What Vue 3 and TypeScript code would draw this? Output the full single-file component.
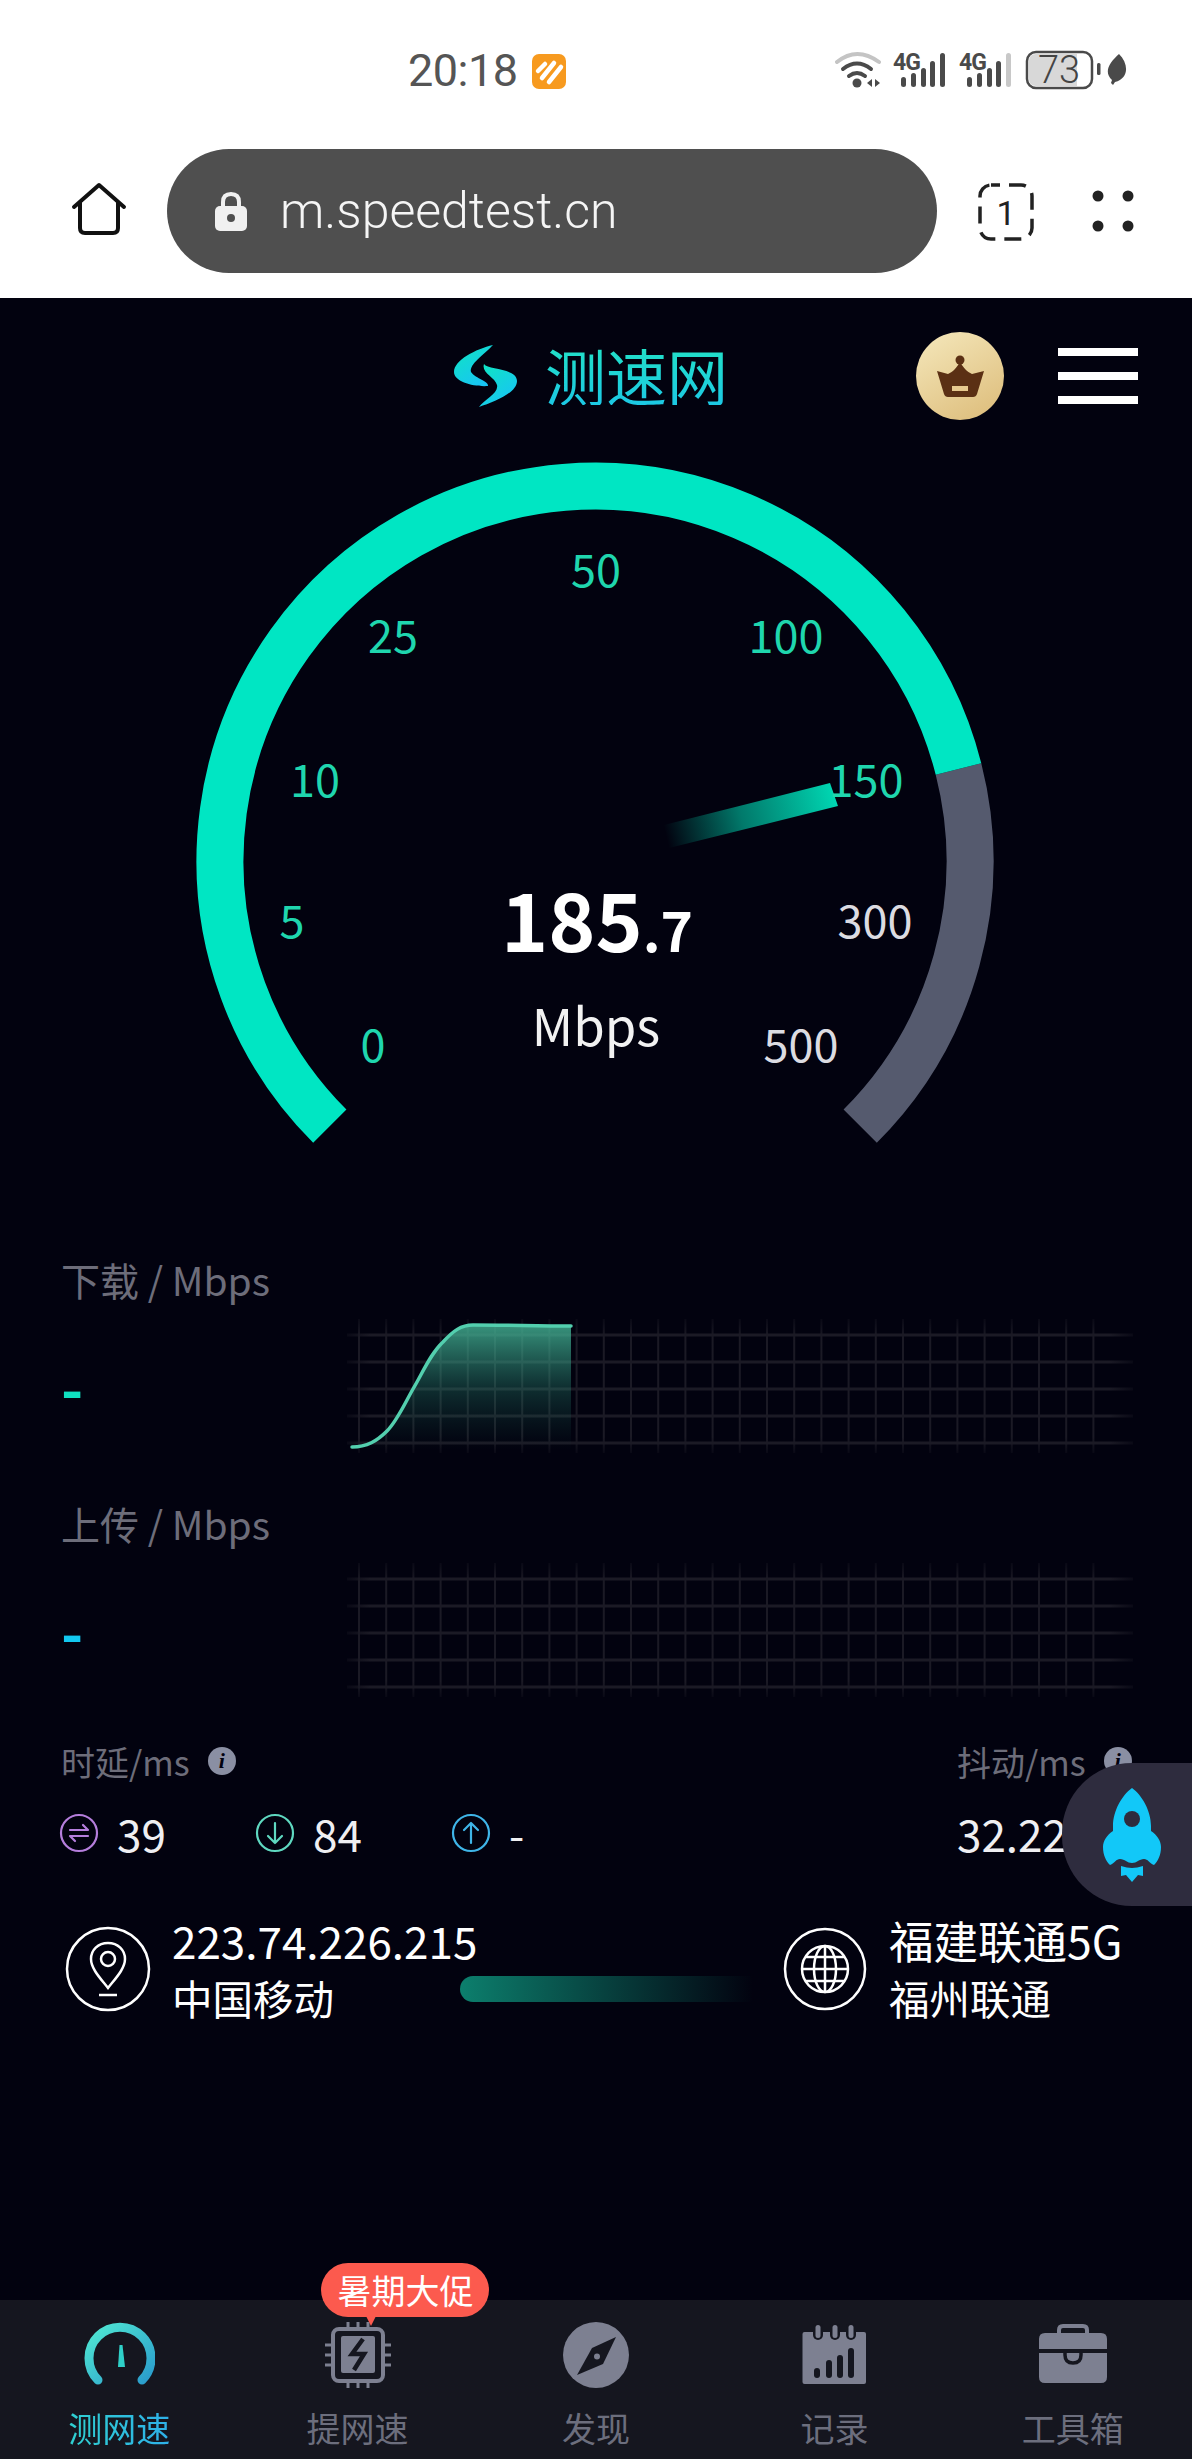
<template>
  <div class="page">
    <!-- phone status bar -->
    <div class="status">
      <span class="clock">20:18</span>
      <svg class="app-badge" viewBox="0 0 34 35" width="34" height="35">
        <rect width="34" height="35" rx="7" fill="#f79a1f" />
        <path d="M6 17 L13 10 M10 24 L22 9 M17 28 L29 13" stroke="#fff" stroke-width="4.5" stroke-linecap="round" />
      </svg>
      <svg class="status-icons" viewBox="835 45 292 50" width="292" height="50">
        <g fill="none" stroke-linecap="round">
          <path d="M837 62 Q857 46 879 62" stroke="#c4c4c4" stroke-width="4" />
          <path d="M843 69 Q857 58 871 69" stroke="#4a4a4a" stroke-width="4" />
          <path d="M849 76 Q857 70 865 76" stroke="#4a4a4a" stroke-width="4" />
        </g>
        <circle cx="857" cy="83" r="4.5" fill="#4a4a4a" />
        <path d="M867 83 L872 79 V87Z M875 79 V87 L880 83Z" fill="#4a4a4a" />
        <g v-for="ox in [0, 66]" :key="ox">
          <text :x="893 + ox" y="70" class="mini">4G</text>
          <rect :x="901 + ox" y="77" width="5" height="10" rx="2.5" fill="#4a4a4a" />
          <rect :x="911 + ox" y="73" width="5" height="14" rx="2.5" fill="#4a4a4a" />
          <rect :x="921 + ox" y="68" width="5" height="19" rx="2.5" fill="#4a4a4a" />
          <rect :x="930 + ox" y="61" width="5" height="26" rx="2.5" fill="#4a4a4a" />
          <rect :x="940 + ox" y="53" width="5" height="34" rx="2.5" :fill="ox ? '#c8c8c8' : '#4a4a4a'" />
        </g>
        <rect x="1027" y="52" width="65" height="36" rx="9" fill="#fff" stroke="#4a4a4a" stroke-width="2.5" />
        <path d="M1036 54 H1077 V86 H1036 Q1029 86 1029 79 V61 Q1029 54 1036 54Z" fill="#d8d8d8" />
        <text x="1059" y="83" class="batt">73</text>
        <rect x="1097" y="63" width="3.5" height="12" rx="1.5" fill="#4a4a4a" />
        <path d="M1119 54 C1129 64 1129 78 1115 82 L1113 85 L1111 83 L1112 80 C1103 72 1110 62 1119 54Z" fill="#4a4a4a" />
      </svg>
    </div>

    <!-- browser toolbar -->
    <div class="browser">
      <svg viewBox="0 0 56 56" width="56" height="56">
        <path d="M3 25 L28 3 L53 25 M9 21 V46 Q9 51 14 51 H42 Q47 51 47 46 V21" fill="none" stroke="#111" stroke-width="4" stroke-linejoin="round" stroke-linecap="round" />
      </svg>
      <div class="url">
        <svg viewBox="0 0 34 40" width="34" height="40">
          <path d="M9 16 V11 Q9 3 17 3 Q25 3 25 11 V16" fill="none" stroke="#f0f0f0" stroke-width="4" />
          <rect x="1" y="15" width="32" height="25" rx="5" fill="#f0f0f0" />
          <circle cx="17" cy="27" r="4" fill="#4f4f4f" />
        </svg>
        <span>m.speedtest.cn</span>
      </div>
      <svg class="tabs" viewBox="0 0 56 58" width="56" height="58">
        <rect x="2" y="2" width="52" height="54" rx="11" fill="none" stroke="#222" stroke-width="3.5" stroke-dasharray="17 9" stroke-dashoffset="8" />
        <text x="28" y="42" class="tab-num">1</text>
      </svg>
      <svg class="dots" viewBox="0 0 42 42" width="42" height="42">
        <circle cx="6" cy="6" r="5.5" /><circle cx="36" cy="6" r="5.5" />
        <circle cx="6" cy="36" r="5.5" /><circle cx="36" cy="36" r="5.5" />
      </svg>
    </div>

    <div class="screen">
      <header class="topbar">
        <svg class="logo-mark" viewBox="0 0 63 64" width="63" height="64">
          <defs>
            <linearGradient id="logoGrad" x1="0" y1="0" x2="0.7" y2="1">
              <stop offset="0" stop-color="#0fe6c0" />
              <stop offset="1" stop-color="#18c4f5" />
            </linearGradient>
          </defs>
          <path d="M39 1 C22 5 0 16 0 28 C0 38 20 43 34 42 C35 37 22 35 17 28 C15 20 30 11 39 1Z" fill="url(#logoGrad)" />
          <path d="M30 20 C34 26 63 24 63 37 C63 49 40 58 25 63 C30 56 45 49 43 41 C41 33 27 29 30 20Z" fill="url(#logoGrad)" />
        </svg>
        <span class="logo-text">测速网</span>
        <div class="crown">
          <svg viewBox="0 0 54 52" width="54" height="52">
            <circle cx="27" cy="10" r="4.5" fill="#5b3014" />
            <path d="M4 21 L15 24 C20 22 24 17 27 12 C30 17 34 22 39 24 L51 21 L44 44 Q43 47 40 47 H15 Q12 47 11 44Z" fill="#5b3014" />
            <rect x="19" y="36" width="16" height="5" fill="#e6c98e" />
          </svg>
        </div>
        <div class="burger"><i></i><i></i><i></i></div>
      </header>

      <!-- dial, drawn in page coordinates -->
      <svg class="gauge" viewBox="0 454 1192 710" width="1192" height="710">
        <defs>
          <linearGradient id="needleGrad" gradientUnits="userSpaceOnUse" x1="666" y1="836" x2="834" y2="795">
            <stop offset="0" stop-color="#00c9a8" stop-opacity="0" />
            <stop offset="0.45" stop-color="#00c9a8" stop-opacity="0.6" />
            <stop offset="1" stop-color="#00d6b2" />
          </linearGradient>
        </defs>
        <path :d="arcRest" fill="none" stroke="#555a6e" stroke-width="47" />
        <path :d="arcDone" fill="none" stroke="#00e6c3" stroke-width="47" />
        <polygon points="664,825 830,783 838,806 669,848" fill="url(#needleGrad)" />
        <text
          v-for="t in ticks"
          :key="t.label"
          :x="t.x"
          :y="t.y"
          class="tick"
          :fill="t.on ? '#1fd6ae' : '#dcdce2'"
        >{{ t.label }}</text>
        <text x="597" y="952" class="speed">185<tspan class="speed-dec">.7</tspan></text>
        <text x="596" y="1046" class="unit">Mbps</text>
      </svg>

      <section v-for="m in metrics" :key="m.label" class="metric" :class="m.cls">
        <div class="metric-label">{{ m.label }}</div>
        <div class="metric-row">
          <span class="metric-dash" :style="{ color: m.color }">-</span>
          <svg class="chart" viewBox="0 0 786 140" width="786" height="140">
            <defs>
              <linearGradient :id="m.cls + 'H'" gradientUnits="userSpaceOnUse" x1="0" y1="0" x2="786" y2="0">
                <stop offset="0" stop-color="#1b1a25" stop-opacity="0.3" />
                <stop offset="0.03" stop-color="#1b1a25" />
                <stop offset="0.97" stop-color="#1b1a25" />
                <stop offset="1" stop-color="#1b1a25" stop-opacity="0.3" />
              </linearGradient>
              <linearGradient :id="m.cls + 'V'" gradientUnits="userSpaceOnUse" x1="0" y1="2" x2="0" y2="136">
                <stop offset="0" stop-color="#1b1a25" stop-opacity="0.3" />
                <stop offset="0.14" stop-color="#1b1a25" />
                <stop offset="0.88" stop-color="#1b1a25" />
                <stop offset="1" stop-color="#1b1a25" stop-opacity="0.3" />
              </linearGradient>
              <linearGradient id="areaGrad" x1="0" y1="0" x2="0" y2="1">
                <stop offset="0" stop-color="#46b898" stop-opacity="0.8" />
                <stop offset="0.5" stop-color="#2f9b82" stop-opacity="0.3" />
                <stop offset="1" stop-color="#1a6a5c" stop-opacity="0" />
              </linearGradient>
            </defs>
            <line v-for="y in hLines" :key="'h' + y" x1="0" x2="786" :y1="y" :y2="y" :stroke="`url(#${m.cls}H)`" stroke-width="3" />
            <line v-for="x in vLines" :key="'v' + x" :x1="x" :x2="x" y1="2" y2="136" :stroke="`url(#${m.cls}V)`" stroke-width="2" />
            <template v-if="m.curve">
              <path :d="curve + ' V132 H5Z'" fill="url(#areaGrad)" />
              <path :d="curve" fill="none" stroke="#53cfae" stroke-width="3.5" stroke-linecap="round" />
            </template>
          </svg>
        </div>
      </section>

      <section class="stats">
        <div class="stat-col">
          <div class="stat-label">时延/ms <span class="info">i</span></div>
          <div class="stat-values">
            <div v-for="p in pings" :key="p.cls" class="ping">
              <svg viewBox="0 0 40 40" width="40" height="40" fill="none" :stroke="p.color" stroke-width="2.2" stroke-linecap="round" stroke-linejoin="round">
                <circle cx="20" cy="20" r="18" />
                <path :d="p.d" />
              </svg>
              <span>{{ p.value }}</span>
            </div>
          </div>
        </div>
        <div class="stat-col jitter">
          <div class="stat-label">抖动/ms <span class="info">i</span></div>
          <div class="stat-values"><span class="jitter-val">32.22</span></div>
        </div>
        <div class="boost">
          <svg viewBox="0 0 60 96" width="60" height="96">
            <path d="M30 1 C40 8 49 24 49 39 L49 44 C55 48 59 54 59 60 C59 68 56 74 52 78 C47 76 46 72 42 72 C37 72 35 76 30 76 C25 76 23 72 18 72 C14 72 13 76 8 78 C4 74 1 68 1 60 C1 54 5 48 11 44 L11 39 C11 24 20 8 30 1Z" fill="#12c8f8" />
            <path d="M19 79 Q25 81 30 81 Q35 81 41 79 V89 L36 88 L30 95 L24 88 L19 89Z" fill="#12c8f8" />
            <circle cx="30" cy="32" r="8" fill="#2e2c3e" />
          </svg>
        </div>
      </section>

      <section class="link">
        <div class="peer peer-left">
          <svg viewBox="0 0 86 86" width="86" height="86" fill="none" stroke="#fff" stroke-width="2.5">
            <circle cx="43" cy="43" r="41" />
            <path d="M43 17 C33 17 26 24 26 33 C26 43 36 53 43 62 C50 53 60 43 60 33 C60 24 53 17 43 17Z" />
            <circle cx="43" cy="33" r="7" />
            <path d="M34 69 H52" />
          </svg>
          <div class="peer-text">
            <div class="line-a">223.74.226.215</div>
            <div class="line-b">中国移动</div>
          </div>
        </div>
        <div class="link-bar"></div>
        <div class="peer">
          <svg viewBox="0 0 84 86" width="84" height="86" fill="none" stroke="#fff" stroke-width="2.5">
            <circle cx="42" cy="43" r="40" />
            <circle cx="42" cy="43" r="23" />
            <ellipse cx="42" cy="43" rx="11" ry="23" />
            <path d="M42 20 V66 M19 43 H65 M23 31 H61 M23 55 H61" />
          </svg>
          <div class="peer-text">
            <div class="line-a cn">福建联通5G</div>
            <div class="line-b">福州联通</div>
          </div>
        </div>
      </section>

      <nav class="tabbar">
        <a class="tab active">
          <svg viewBox="-2 0 72 66" width="72" height="66">
            <defs>
              <linearGradient id="activeGrad" x1="0" y1="0" x2="1" y2="1">
                <stop offset="0" stop-color="#50e8d2" />
                <stop offset="1" stop-color="#2a9ccc" />
              </linearGradient>
            </defs>
            <path d="M13 58 A31 31 0 1 1 57 58" fill="none" stroke="url(#activeGrad)" stroke-width="9" stroke-linecap="round" />
            <path d="M33 45 L34.5 23 H37.5 L40 45Z" fill="#2fd0c8" />
          </svg>
          <span>测网速</span>
        </a>
        <a class="tab">
          <em class="promo">暑期大促</em>
          <svg viewBox="0 0 66 66" width="66" height="66">
            <g stroke="#7d8091">
              <path stroke-width="3" d="M23 0 V8 M33 0 V8 M43 0 V8 M23 58 V66 M33 58 V66 M43 58 V66 M0 23 H8 M0 33 H8 M0 43 H8 M58 23 H66 M58 33 H66 M58 43 H66" />
              <rect x="8" y="7" width="50" height="52" rx="6" fill="none" stroke-width="4" />
            </g>
            <rect x="16" y="14" width="34" height="37" rx="2" fill="#7d8091" />
            <path d="M38 17 L27 32 H39 L29 48" fill="none" stroke="#15161f" stroke-width="4.5" />
          </svg>
          <span>提网速</span>
        </a>
        <a class="tab">
          <svg viewBox="0 0 66 66" width="66" height="66">
            <circle cx="33" cy="33" r="33" fill="#7d8091" />
            <path d="M53 15 L29 26 L14 53 L40 42Z" fill="#15161f" />
            <circle cx="34" cy="34.5" r="3" fill="#7d8091" />
          </svg>
          <span>发现</span>
        </a>
        <a class="tab">
          <svg viewBox="0 0 66 66" width="66" height="66">
            <rect x="1.5" y="10" width="63.5" height="52" rx="2" fill="#7d8091" />
            <g v-for="x in [17, 34, 50]" :key="x">
              <rect :x="x - 5" y="1" width="10" height="17" rx="5" fill="#15161f" />
              <rect :x="x - 2.5" y="3" width="5" height="13" rx="2.5" fill="#7d8091" />
            </g>
            <rect x="13" y="46" width="6" height="10" rx="3" fill="#15161f" />
            <rect x="25" y="38" width="6" height="18" rx="3" fill="#15161f" />
            <rect x="36" y="33" width="6" height="23" rx="3" fill="#15161f" />
            <rect x="47" y="26" width="6" height="30" rx="3" fill="#15161f" />
          </svg>
          <span>记录</span>
        </a>
        <a class="tab">
          <svg viewBox="0 0 70 62" width="70" height="62">
            <path d="M21 12 V6 Q21 2 25 2 H45 Q49 2 49 6 V12" fill="none" stroke="#7d8091" stroke-width="4" />
            <path d="M1 15 Q1 9 7 9 H63 Q69 9 69 15 V25 H1Z M1 29 H69 V53 Q69 59 63 59 H7 Q1 59 1 53Z" fill="#7d8091" />
            <path d="M27 29 V31 Q27 39 35 39 Q43 39 43 31 V29" fill="none" stroke="#15161f" stroke-width="3.5" />
          </svg>
          <span>工具箱</span>
        </a>
      </nav>
    </div>
  </div>
</template>

<script setup lang="ts">
const cx = 595
const cy = 861
const r = 375

// angle in degrees, measured clockwise from straight up
function polar(deg: number): string {
  const a = (deg * Math.PI) / 180
  return `${(cx + r * Math.sin(a)).toFixed(1)} ${(cy - r * Math.cos(a)).toFixed(1)}`
}

function arc(from: number, to: number): string {
  const large = to - from > 180 ? 1 : 0
  return `M${polar(from)} A${r} ${r} 0 ${large} 1 ${polar(to)}`
}

const arcDone = arc(-135, 75.8)
const arcRest = arc(75.8, 135)

const ticks = [
  { label: '0', x: 373, y: 1062, on: true },
  { label: '5', x: 292, y: 938, on: true },
  { label: '10', x: 315, y: 797, on: true },
  { label: '25', x: 393, y: 653, on: true },
  { label: '50', x: 596, y: 587, on: true },
  { label: '100', x: 786, y: 653, on: true },
  { label: '150', x: 866, y: 797, on: true },
  { label: '300', x: 875, y: 938, on: false },
  { label: '500', x: 801, y: 1062, on: false }
]

const metrics = [
  { label: '下载 / Mbps', cls: 'down', color: '#0fe0c0', curve: true },
  { label: '上传 / Mbps', cls: 'up', color: '#12c8f0', curve: false }
]

const hLines = [18, 45, 72, 99, 126]
const vLines = Array.from({ length: 28 }, (_, i) => 12 + i * 27.2)
const curve = 'M5 130 C20 130 30 124 40 114 C50 104 58 86 66 72 C76 55 84 36 96 25 C106 14 114 8 126 8 C160 8 190 9 224 9'

const pings = [
  { cls: 'rtt', color: '#b57edc', value: '39', d: 'M11 17 H29 L24 12 M29 23 H11 L16 28' },
  { cls: 'dl', color: '#5fd8c0', value: '84', d: 'M20 10 V30 M13 23 L20 30 L27 23' },
  { cls: 'ul', color: '#3fb5e8', value: '-', d: 'M20 30 V10 M13 17 L20 10 L27 17' }
]
</script>

<style scoped>
.page {
  position: relative;
  width: 1192px;
  height: 2459px;
  display: flex;
  flex-direction: column;
  overflow: hidden;
  background: #fff;
  font-family: "Noto Sans CJK SC", "Noto Sans", sans-serif;
}

.status {
  height: 140px;
  flex: none;
  display: flex;
  align-items: center;
  padding-left: 408px;
}

.clock {
  font-family: Roboto, sans-serif;
  font-size: 45px;
  font-weight: 400;
  color: #555;
  letter-spacing: -0.5px;
}

.app-badge {
  margin-left: 14px;
  margin-top: 2px;
}

.status-icons {
  margin-left: auto;
  margin-right: 65px;
}

.mini {
  font: 700 23px "Roboto", sans-serif;
  fill: #4a4a4a;
  letter-spacing: -1px;
}

.batt {
  font: 300 38px "Roboto", sans-serif;
  fill: #444;
  text-anchor: middle;
}

.browser {
  height: 158px;
  box-sizing: border-box;
  flex: none;
  display: flex;
  align-items: flex-start;
  padding: 9px 0 0 71px;
}

.browser > svg:first-child {
  margin-top: 33px;
}

.url {
  width: 770px;
  height: 124px;
  box-sizing: border-box;
  margin-left: 40px;
  border-radius: 62px;
  background: #4f4f4f;
  display: flex;
  align-items: center;
  padding-left: 47px;
  gap: 32px;
  font-family: Roboto, sans-serif;
  font-size: 50px;
  font-weight: 300;
  color: #f5f5f5;
}

.tabs {
  margin: 34px 0 0 41px;
}

.tab-num {
  font: 400 34px Roboto, sans-serif;
  fill: #222;
  text-anchor: middle;
}

.dots {
  margin: 41px 0 0 58px;
  fill: #222;
}

.screen {
  position: relative;
  flex: 1;
  display: flex;
  flex-direction: column;
  background: #02020f;
}

.topbar {
  height: 156px;
  flex: none;
  display: flex;
  align-items: center;
  padding-left: 454px;
}

.logo-text {
  margin-left: 28px;
  margin-top: -3px;
  font-size: 61px;
  font-weight: 400;
  line-height: 1;
  background: linear-gradient(180deg, #22e2c6, #1cc8e4);
  -webkit-background-clip: text;
  background-clip: text;
  color: transparent;
}

.crown {
  width: 88px;
  height: 88px;
  margin-left: 188px;
  border-radius: 50%;
  background: linear-gradient(150deg, #f5e8bc, #dcbb78);
  display: flex;
  align-items: center;
  justify-content: center;
}

.burger {
  width: 80px;
  margin-left: 54px;
  display: flex;
  flex-direction: column;
  gap: 16px;
}

.burger i {
  height: 8px;
  background: #fff;
}

.gauge {
  display: block;
  flex: none;
}

.tick {
  font-size: 45px;
  text-anchor: middle;
}

.speed {
  font-size: 80px;
  font-weight: 700;
  fill: #fff;
  text-anchor: middle;
}

.speed-dec {
  font-size: 55px;
}

.unit {
  font-size: 51px;
  fill: #f2f2f2;
  text-anchor: middle;
}

.metric {
  padding: 0 59px 0 61px;
  flex: none;
}

.metric.down {
  margin-top: 90px;
}

.metric.up {
  margin-top: 41px;
}

.metric-label {
  height: 50px;
  line-height: 50px;
  font-size: 39px;
  color: #6d6d7a;
}

.metric-row {
  margin-top: 13px;
  display: flex;
  justify-content: space-between;
  align-items: center;
}

.metric-dash {
  font-size: 60px;
  font-weight: 700;
  line-height: 1;
  margin-top: -2px;
}

.chart {
  display: block;
}

.stats {
  position: relative;
  margin-top: 35px;
  padding: 0 59px 0 61px;
  display: flex;
  justify-content: space-between;
  flex: none;
}

.stat-label {
  height: 50px;
  display: flex;
  align-items: center;
  gap: 18px;
  font-size: 34px;
  color: #6d6d7a;
}

.info {
  width: 28px;
  height: 28px;
  border-radius: 50%;
  background: #8a8fa3;
  color: #02020f;
  font: italic 700 22px "Liberation Serif", serif;
  text-align: center;
  line-height: 28px;
}

.stat-values {
  margin-top: 17px;
  height: 60px;
  display: flex;
  align-items: center;
  font-size: 44px;
  color: #efeff2;
}

.ping {
  width: 196px;
  display: flex;
  align-items: center;
  gap: 18px;
  margin-left: -2px;
  margin-right: 2px;
}

.ping svg {
  flex: none;
}

.jitter {
  width: 176px;
}

.boost {
  position: absolute;
  right: 0;
  top: 27px;
  width: 130px;
  height: 143px;
  border-radius: 70px 0 0 70px;
  background: #2e2c3e;
  display: flex;
  align-items: center;
  padding-left: 40px;
  box-sizing: border-box;
}

.link {
  margin-top: 48px;
  padding-left: 65px;
  display: flex;
  align-items: center;
  flex: none;
  color: #fff;
}

.peer {
  display: flex;
  align-items: center;
  gap: 22px;
}

.peer svg {
  flex: none;
}

.peer-left {
  flex: none;
  width: 395px;
  gap: 21px;
}

.line-a {
  height: 58px;
  line-height: 58px;
  font-size: 44px;
  white-space: nowrap;
}

.line-a.cn {
  font-size: 44.5px;
}

.line-b {
  height: 58px;
  line-height: 58px;
  font-size: 40.5px;
  white-space: nowrap;
}

.link-bar {
  width: 293px;
  height: 26px;
  margin: 40px 30px 0 0;
  border-radius: 13px 0 0 13px;
  background: linear-gradient(90deg, #0c7f6d, rgba(12, 127, 109, 0));
}

.tabbar {
  margin-top: auto;
  height: 159px;
  flex: none;
  display: flex;
  background: #15161f;
}

.tab {
  position: relative;
  flex: 1;
  display: flex;
  flex-direction: column;
  align-items: center;
  padding-top: 22px;
  box-sizing: border-box;
  color: #6c6e7d;
  font-size: 34px;
}

.tab svg {
  height: 66px;
  flex: none;
}

.tab span {
  margin-top: 15px;
  line-height: 50px;
}

.tab.active span {
  background: linear-gradient(90deg, #2fd0d0, #2eb0e8);
  -webkit-background-clip: text;
  background-clip: text;
  color: transparent;
}

.promo {
  position: absolute;
  left: 83px;
  top: -37px;
  height: 54px;
  padding: 0 16px;
  border-radius: 27px;
  background: #fc5a4e;
  color: #fff;
  font-style: normal;
  font-size: 34px;
  line-height: 54px;
  white-space: nowrap;
}

.promo::after {
  content: "";
  position: absolute;
  left: 45px;
  top: 53px;
  border-left: 5px solid transparent;
  border-right: 5px solid transparent;
  border-top: 10px solid #fc5a4e;
}
</style>

<style>
html,
body {
  margin: 0;
  background: #fff;
}
</style>
